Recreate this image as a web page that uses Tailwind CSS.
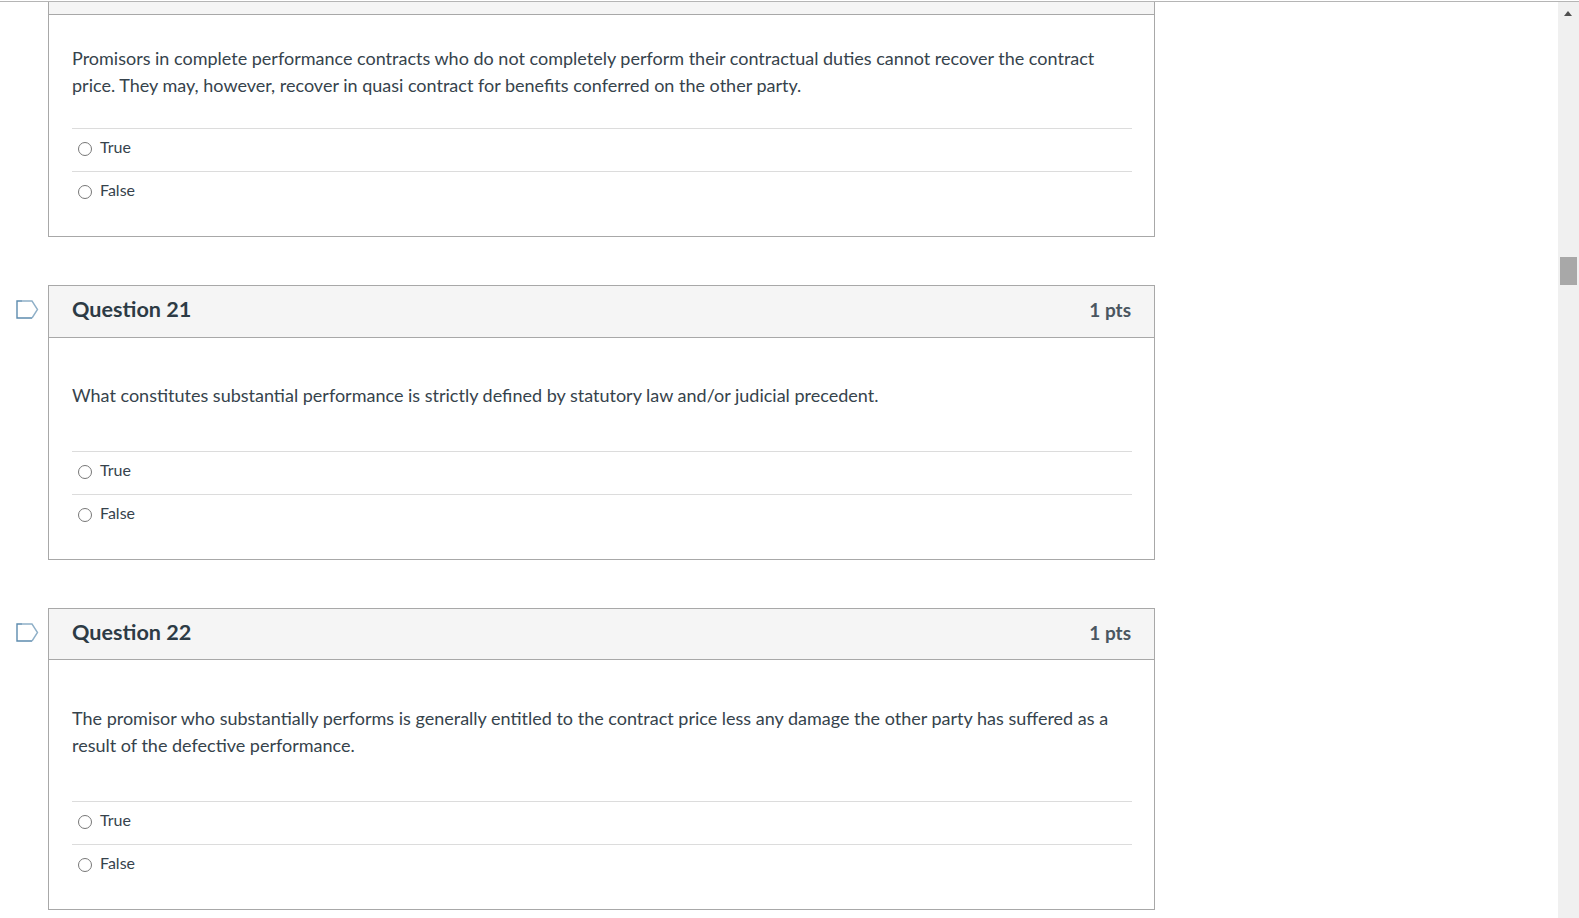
<!DOCTYPE html>
<html lang="en">
<head>
  <meta charset="UTF-8" />
  <title>Quiz</title>
  <script src="https://cdn.jsdelivr.net/npm/@tailwindcss/browser@4"></script>
</head>
<body class="bg-white overflow-hidden font-['Lato','Noto_Sans',sans-serif] text-[#36434c]">
  <div class="flex h-[917px] mt-px border-t border-[#b5b5b5]">
    <main class="flex-1 pl-[48px] overflow-hidden">

      <!-- question 20, scrolled under the top edge -->
      <section class="w-[1107px] border-x border-b border-[#a8a8a8]">
        <div class="h-[12px] bg-[#f5f5f5] border-b border-[#a8a8a8] box-content"></div>
        <div class="pl-[23px] pr-[22px] pt-[30px] pb-[22px]">
          <p class="text-[18px] leading-[27px] h-[83px]">Promisors in complete performance contracts who do not completely perform their contractual duties cannot recover the contract price. They may, however, recover in quasi contract for benefits conferred on the other party.</p>
          <div class="border-t border-[#dcdcdc] h-[43px] flex items-center pl-[6px] gap-[8.5px] text-[16px]">
            <span class="w-[13.5px] h-[13.5px] -mt-[2px] rounded-full border border-[#777777]"></span><span class="-mt-[7px]">True</span>
          </div>
          <div class="border-t border-[#dcdcdc] h-[43px] flex items-center pl-[6px] gap-[8.5px] text-[16px]">
            <span class="w-[13.5px] h-[13.5px] -mt-[2px] rounded-full border border-[#777777]"></span><span class="-mt-[7px]">False</span>
          </div>
        </div>
      </section>

      <!-- question 21 -->
      <section class="relative w-[1107px] mt-[48px] border border-[#a8a8a8]">
        <svg class="absolute -left-[33px] top-[14px]" width="23" height="19" viewBox="0 0 23 19" fill="none">
          <path d="M6 1H1V18H16" stroke="#5d8cae" stroke-width="1.4" />
          <path d="M6 1H16L21.5 9.5L16 18" stroke="#8fb0c8" stroke-width="1.4" />
        </svg>
        <header class="h-[52px] bg-[#f5f5f5] border-b border-[#a8a8a8] flex items-center justify-between pl-[23px] pr-[23px]">
          <h2 class="text-[21.6px] font-bold text-[#2d3b45] -mt-[5px]">Question 21</h2>
          <span class="text-[19px] font-bold text-[#4a5660] -mt-[3px]">1 pts</span>
        </header>
        <div class="pl-[23px] pr-[22px] pt-[44px] pb-[22px]">
          <p class="text-[18px] leading-[27px] h-[69px]">What constitutes substantial performance is strictly defined by statutory law and/or judicial precedent.</p>
          <div class="border-t border-[#dcdcdc] h-[43px] flex items-center pl-[6px] gap-[8.5px] text-[16px]">
            <span class="w-[13.5px] h-[13.5px] -mt-[2px] rounded-full border border-[#777777]"></span><span class="-mt-[7px]">True</span>
          </div>
          <div class="border-t border-[#dcdcdc] h-[43px] flex items-center pl-[6px] gap-[8.5px] text-[16px]">
            <span class="w-[13.5px] h-[13.5px] -mt-[2px] rounded-full border border-[#777777]"></span><span class="-mt-[7px]">False</span>
          </div>
        </div>
      </section>

      <!-- question 22 -->
      <section class="relative w-[1107px] mt-[48px] border border-[#a8a8a8]">
        <svg class="absolute -left-[33px] top-[14px]" width="23" height="19" viewBox="0 0 23 19" fill="none">
          <path d="M6 1H1V18H16" stroke="#5d8cae" stroke-width="1.4" />
          <path d="M6 1H16L21.5 9.5L16 18" stroke="#8fb0c8" stroke-width="1.4" />
        </svg>
        <header class="h-[51px] bg-[#f5f5f5] border-b border-[#a8a8a8] flex items-center justify-between pl-[23px] pr-[23px]">
          <h2 class="text-[21.6px] font-bold text-[#2d3b45] -mt-[4px]">Question 22</h2>
          <span class="text-[19px] font-bold text-[#4a5660] -mt-[2px]">1 pts</span>
        </header>
        <div class="pl-[23px] pr-[22px] pt-[45px] pb-[22px]">
          <p class="text-[18px] leading-[27px] h-[96px]">The promisor who substantially performs is generally entitled to the contract price less any damage the other party has suffered as a result of the defective performance.</p>
          <div class="border-t border-[#dcdcdc] h-[43px] flex items-center pl-[6px] gap-[8.5px] text-[16px]">
            <span class="w-[13.5px] h-[13.5px] -mt-[2px] rounded-full border border-[#777777]"></span><span class="-mt-[7px]">True</span>
          </div>
          <div class="border-t border-[#dcdcdc] h-[43px] flex items-center pl-[6px] gap-[8.5px] text-[16px]">
            <span class="w-[13.5px] h-[13.5px] -mt-[2px] rounded-full border border-[#777777]"></span><span class="-mt-[7px]">False</span>
          </div>
        </div>
      </section>
    </main>

    <!-- scrollbar -->
    <aside class="relative w-[21px] bg-[#f0f0f0]">
      <span class="absolute left-[6px] top-[9px] w-0 h-0 border-x-[4.5px] border-x-transparent border-b-[5px] border-b-[#505050]"></span>
      <span class="absolute left-[2px] top-[255px] w-[17px] h-[28px] bg-[#a8a8a8]"></span>
    </aside>
  </div>
</body>
</html>
